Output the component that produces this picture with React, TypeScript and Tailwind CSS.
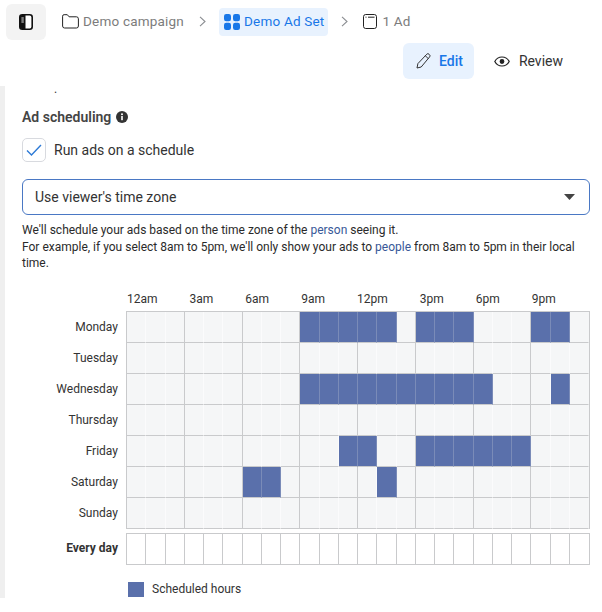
import React from 'react';

const FONT = "font-['Roboto',_'Liberation_Sans',_sans-serif]";

const HOUR_LABELS = ['12am', '3am', '6am', '9am', '12pm', '3pm', '6pm', '9pm'];

const range = (from: number, to: number) => Array.from({ length: to - from + 1 }, (_, i) => from + i);

const SCHEDULE: { day: string; hours: number[] }[] = [
  { day: 'Monday', hours: [...range(9, 13), ...range(15, 17), 21, 22] },
  { day: 'Tuesday', hours: [] },
  { day: 'Wednesday', hours: [...range(9, 18), 22] },
  { day: 'Thursday', hours: [] },
  { day: 'Friday', hours: [11, 12, ...range(15, 20)] },
  { day: 'Saturday', hours: [6, 7, 13] },
  { day: 'Sunday', hours: [] },
];

const HOURS = range(0, 23);

const Cell = ({ hour, active }: { hour: number; active: boolean }) => {
  const groupEnd = hour % 3 === 2;
  let border = 'border-r-[#fbfbfc]';
  if (hour === 23) border = 'border-r-transparent';
  else if (active) border = 'border-r-[#7a8bb8]';
  else if (groupEnd) border = 'border-r-[#c9cacc]';
  return (
    <div className={`border-r border-b border-b-[#c9cacc] ${border} ${active ? 'bg-[#5a70ab]' : 'bg-[#f5f6f7]'}`} />
  );
};

const PanelIcon = () => (
  <svg width="14" height="16" viewBox="0 0 14 16">
    <rect x="0.8" y="0.8" width="12.4" height="14.4" rx="2.5" fill="#fff" stroke="#111" strokeWidth="1.6" />
    <path d="M3 1h3.5v14H3a2.2 2.2 0 0 1-2.2-2.2V3.2A2.2 2.2 0 0 1 3 1z" fill="#111" />
    <path d="M2.4 4h2.4M2.4 6h2.4M2.4 8h2.4" stroke="#fff" strokeWidth="0.9" />
  </svg>
);

const FolderIcon = () => (
  <svg width="17" height="15" viewBox="0 0 17 15" fill="none" stroke="#222" strokeWidth="1">
    <path d="M.6 3V2.2A1.5 1.5 0 0 1 2.1.7h3.2l1.8 2.1h7.3a2 2 0 0 1 2 2v7.2a2 2 0 0 1-2 2H2.6a2 2 0 0 1-2-2z" />
  </svg>
);

const GridIcon = () => (
  <svg width="16" height="16" viewBox="0 0 16 16" fill="#1877e8">
    <rect x="0" y="0" width="7" height="7.2" rx="2.2" />
    <rect x="9" y="0" width="7" height="7.2" rx="2.2" />
    <rect x="0" y="8.8" width="7" height="7.2" rx="2.2" />
    <rect x="9" y="8.8" width="7" height="7.2" rx="2.2" />
  </svg>
);

const AdIcon = () => (
  <svg width="14" height="15" viewBox="0 0 14 15" fill="none" stroke="#222" strokeWidth="1">
    <rect x="0.5" y="0.5" width="13" height="14" rx="2.2" />
    <path d="M2.5 3.2h1M5 3.2h6.5" />
  </svg>
);

const Chevron = () => (
  <svg width="7" height="11" viewBox="0 0 7 11" fill="none" stroke="#8a8d91" strokeWidth="1.1">
    <path d="M1 .8 6 5.5 1 10.2" />
  </svg>
);

const PencilIcon = () => (
  <svg width="15" height="16" viewBox="0 0 15 16" fill="none" stroke="#333" strokeWidth="1">
    <path d="M10.8 1.2a1.5 1.5 0 0 1 2.2 0l.6.6a1.5 1.5 0 0 1 0 2.1L5.2 14 1 15l.9-4.4zM9.4 2.8l3 3" />
  </svg>
);

const EyeIcon = () => (
  <svg width="16" height="11" viewBox="0 0 16 11" fill="none" stroke="#222" strokeWidth="1.2">
    <path d="M.8 5.5C2.3 2.6 4.9 1 8 1s5.7 1.6 7.2 4.5C13.7 8.4 11.1 10 8 10S2.3 8.4.8 5.5z" />
    <circle cx="8" cy="5.5" r="1.8" fill="#222" />
  </svg>
);

const InfoIcon = () => (
  <svg width="12" height="12" viewBox="0 0 12 12">
    <circle cx="6" cy="6" r="6" fill="#333" />
    <rect x="5.2" y="5" width="1.6" height="4.2" fill="#fff" />
    <circle cx="6" cy="3.2" r="1" fill="#fff" />
  </svg>
);

export default function App() {
  return (
    <div className={`${FONT} h-[612px] w-[602px] overflow-hidden bg-white text-[#1c1e21]`}>
      {/* Top bar */}
      <div className="flex h-[43px] items-center pl-[6px]">
        <button className="flex h-[36px] w-[40px] items-center justify-center rounded-[6px] bg-[#f3f3f3]">
          <PanelIcon />
        </button>
        <div className="ml-[16px] flex items-center gap-[4px] text-[13.5px] text-[#7c7c7c]">
          <FolderIcon />
          <span className="tracking-[0.2px]">Demo campaign</span>
        </div>
        <div className="ml-[15px]">
          <Chevron />
        </div>
        <div className="ml-[13px] flex h-[28px] items-center gap-[4px] rounded-[4px] bg-[#e8f2fe] pl-[5px] pr-[4px] text-[13.5px] text-[#1877e8]">
          <GridIcon />
          <span className="tracking-[0.2px]">Demo Ad Set</span>
        </div>
        <div className="ml-[13px]">
          <Chevron />
        </div>
        <div className="ml-[15px] flex items-center gap-[5px] text-[13.5px] text-[#7c7c7c]">
          <AdIcon />
          <span className="tracking-[0.2px]">1 Ad</span>
        </div>
      </div>

      <div className="flex h-[36px] items-center justify-end pr-[39px]">
        <div className="flex h-[36px] items-center gap-[8px] rounded-[6px] bg-[#e8f2fe] pl-[13px] pr-[11px] text-[14px] font-medium text-[#1877e8]">
          <PencilIcon />
          <span>Edit</span>
        </div>
        <div className="ml-[20px] flex items-center gap-[9px] text-[14px] text-[#333]">
          <EyeIcon />
          <span>Review</span>
        </div>
      </div>

      {/* Form panel */}
      <div className="mt-[7px] border-l-[5px] border-l-[#efefef] pl-[17px] pr-[12px]">
        <div className="h-[22px] pl-[32px] text-[12px] leading-[6px] text-[#333]">.</div>

        <div className="flex items-center gap-[5px] text-[14px] font-semibold leading-[18px] text-[#444]">
          <span>Ad scheduling</span>
          <InfoIcon />
        </div>

        <div className="mt-[12px] flex items-center gap-[8px]">
          <div className="flex h-[24px] w-[24px] items-center justify-center rounded-[5px] border border-[#d8dadf] bg-white">
            <svg width="16" height="12" viewBox="0 0 16 12" fill="none" stroke="#2d7ad6" strokeWidth="1.4">
              <path d="M1 6.5 5.5 11 15 1" />
            </svg>
          </div>
          <span className="pt-[1px] text-[14px] text-[#333]">Run ads on a schedule</span>
        </div>

        <div className="mt-[17px] flex h-[36px] items-center justify-between rounded-[6px] border border-[#4a78c4] pl-[12px] pr-[14px] text-[14px] text-[#333]">
          <span>Use viewer's time zone</span>
          <svg width="11" height="6" viewBox="0 0 11 6" fill="#444">
            <path d="M0 0h11L5.5 6z" />
          </svg>
        </div>

        <p className="mt-[7px] text-[12px] leading-[16.5px] text-[#2a2a2a]">
          We'll schedule your ads based on the time zone of the <span className="text-[#385898]">person</span> seeing it.
          <br />
          For example, if you select 8am to 5pm, we'll only show your ads to <span className="text-[#385898]">people</span>{' '}
          from 8am to 5pm in their local
          <br />
          time.
        </p>

        {/* Hour labels */}
        <div className="mt-[19px] flex h-[20.5px] gap-[32px] pl-[105px] text-[12px] leading-[16px] text-[#333]">
          {HOUR_LABELS.map((label) => (
            <span key={label}>{label}</span>
          ))}
        </div>

        {/* Schedule grid */}
        <div className="flex">
          <div className="grid w-[96px] grid-rows-[repeat(7,31px)] pt-[1px] text-[12px] text-[#333]">
            {SCHEDULE.map((row) => (
              <div key={row.day} className="flex items-center justify-end pb-[1px]">
                {row.day}
              </div>
            ))}
          </div>
          <div className="ml-[8px] grid w-[464px] grid-cols-[repeat(24,minmax(0,1fr))] grid-rows-[repeat(7,31px)] border-x border-t border-[#c9cacc]">
            {SCHEDULE.map((row) =>
              HOURS.map((hour) => <Cell key={`${row.day}-${hour}`} hour={hour} active={row.hours.includes(hour)} />),
            )}
          </div>
        </div>

        {/* Every day row */}
        <div className="mt-[4px] flex">
          <div className="flex h-[32px] w-[96px] items-center justify-end pb-[2px] text-[12px] font-bold text-[#333]">
            Every day
          </div>
          <div className="ml-[8px] grid h-[32px] w-[464px] grid-cols-[repeat(24,minmax(0,1fr))] border border-[#c9cacc]">
            {HOURS.map((hour) => (
              <div key={hour} className={hour === 23 ? '' : 'border-r border-r-[#c9cacc]'} />
            ))}
          </div>
        </div>

        {/* Legend */}
        <div className="mt-[15px] flex items-center gap-[8px] pl-[106px]">
          <div className="h-[15px] w-[16px] bg-[#5a70ab]" />
          <span className="text-[12px] text-[#333]">Scheduled hours</span>
        </div>
      </div>
    </div>
  );
}
